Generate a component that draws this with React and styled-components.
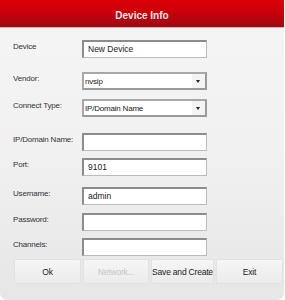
import styled, { createGlobalStyle } from "styled-components";

const Global = createGlobalStyle`
  html, body {
    margin: 0;
    padding: 0;
    background: #ffffff;
  }
  * {
    box-sizing: border-box;
  }
`;

const fields = [
  { label: "Device", value: "New Device", top: 12 },
  { label: "Vendor:", value: "nvsip", select: true, top: 14 },
  { label: "Connect Type:", value: "IP/Domain Name", select: true, top: 9 },
  { label: "IP/Domain Name:", value: "", top: 16 },
  { label: "Port:", value: "9101", top: 7 },
  { label: "Username:", value: "admin", top: 11 },
  { label: "Password:", value: "", top: 8 },
  { label: "Channels:", value: "", top: 7 },
];

const App = () => {
  return (
    <>
      <Global />
      <Window>
        <Header>Device Info</Header>
        <Form>
          {fields.map((f) => (
            <Row key={f.label} $top={f.top}>
              <Label>{f.label}</Label>
              {f.select ? (
                <Select>
                  <span>{f.value}</span>
                  <Arrow />
                </Select>
              ) : (
                <Input>{f.value}</Input>
              )}
            </Row>
          ))}
        </Form>
        <Buttons>
          <Button $w={67}>Ok</Button>
          <Button $w={66} $disabled>
            Network...
          </Button>
          <Button $w={63}>Save and Create</Button>
          <Button $w={67}>Exit</Button>
        </Buttons>
      </Window>
    </>
  );
};

export default App;

const Window = styled.div`
  width: 284px;
  height: 300px;
  border-radius: 0 0 7px 7px;
  overflow: hidden;
  background: linear-gradient(#f5f5f5 0%, #f1f1f1 50%, #e6e6e6 100%);
  display: flex;
  flex-direction: column;
  font-family: "Liberation Sans", Arial, sans-serif;
  color: #222;
`;

const Header = styled.div`
  height: 28px;
  background: linear-gradient(#dc0008 0%, #c8000a 45%, #9c0a14 100%);
  border-bottom: 1px solid #bdbdbd;
  color: #f4e8e8;
  font-weight: bold;
  font-size: 10px;
  display: flex;
  align-items: center;
  justify-content: center;
  padding-top: 3px;
`;

const Form = styled.div`
  display: flex;
  flex-direction: column;
`;

const Row = styled.div`
  display: flex;
  align-items: flex-start;
  margin-top: ${(p) => p.$top}px;
  height: 18px;
`;

const Label = styled.div`
  width: 82px;
  padding-left: 13px;
  padding-top: 2px;
  font-size: 8px;
  letter-spacing: -0.2px;
  color: #333;
`;

const Input = styled.div`
  width: 125px;
  height: 18px;
  background: #fff;
  border: 1px solid #bbb;
  border-top: 2px solid #8c8c8c;
  border-left: 2px solid #8c8c8c;
  font-size: 8.5px;
  padding: 2px 0 0 4px;
  color: #222;
`;

const Select = styled(Input)`
  padding: 0;
  display: flex;
  align-items: center;
  border-right: 2px solid #9a9a9a;
  border-bottom: 2px solid #9a9a9a;
  border-top: 2px solid #a8a8a8;
  border-left: 2px solid #a8a8a8;
  font-size: 8px;
  letter-spacing: -0.2px;
  > span {
    flex: 1;
    padding-left: 1px;
  }
`;

const Arrow = styled.div`
  width: 13px;
  height: 100%;
  background: #f4f4f4;
  position: relative;
  &::after {
    content: "";
    position: absolute;
    left: 4px;
    top: 6px;
    border-left: 2.5px solid transparent;
    border-right: 2.5px solid transparent;
    border-top: 3px solid #222;
  }
`;

const Buttons = styled.div`
  display: flex;
  gap: 2px;
  padding-left: 14px;
  margin-top: 3px;
`;

const Button = styled.div`
  width: ${(p) => p.$w}px;
  height: 25px;
  background: linear-gradient(#f6f6f6, #ebebeb);
  border: 1px solid #e2e2e2;
  border-radius: 2px;
  display: flex;
  align-items: center;
  justify-content: center;
  font-size: 8.5px;
  letter-spacing: -0.2px;
  white-space: nowrap;
  color: ${(p) => (p.$disabled ? "#c6c6c6" : "#222")};
`;
